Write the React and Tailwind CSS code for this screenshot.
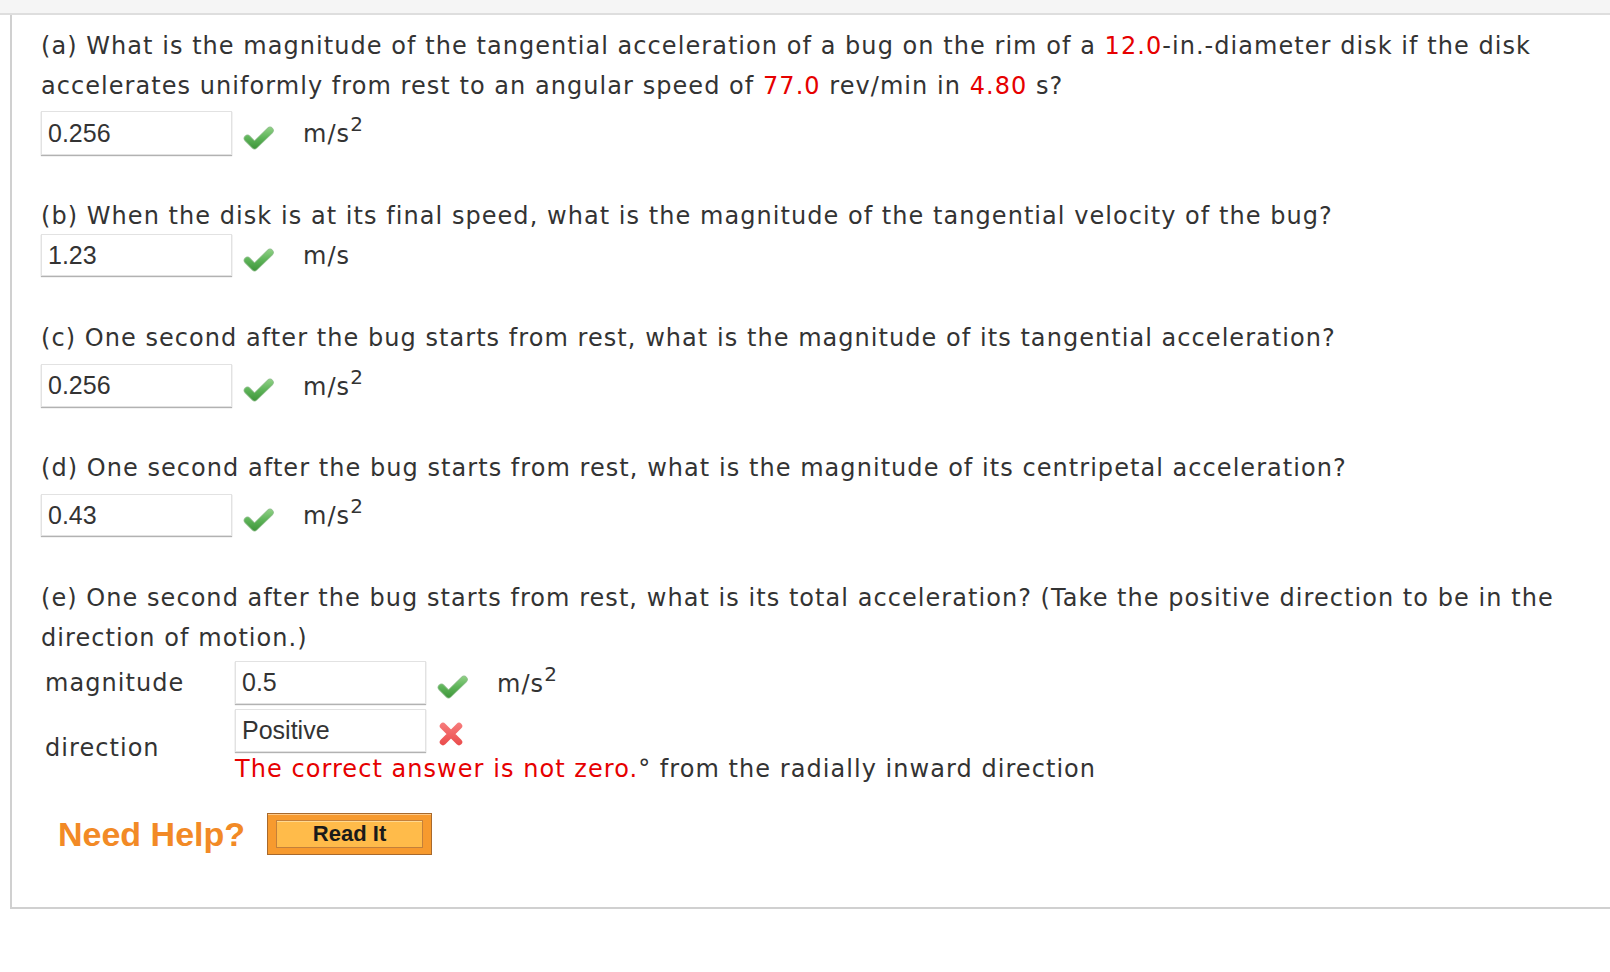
import React from "react";

const txt = "font-['DejaVu_Sans',Verdana,sans-serif] text-[24px] tracking-[1.05px] text-[#333]";
const red = "text-[#e60000]";

function Check() {
  return (
    <svg width="31" height="25" viewBox="0 0 31 25" className="mt-[8px]">
      <defs>
        <linearGradient id="chk" x1="0" y1="0" x2="0" y2="25" gradientUnits="userSpaceOnUse">
          <stop offset="0" stopColor="#9bd68f" />
          <stop offset="0.5" stopColor="#5fb55a" />
          <stop offset="1" stopColor="#3a9236" />
        </linearGradient>
      </defs>
      <path d="M4.5 13.5 L11.5 20.5 L27 5.5" fill="none" stroke="#3b8a37" strokeWidth="7.5" strokeLinecap="round" strokeLinejoin="round" opacity="0.55" />
      <path d="M4.5 13.5 L11.5 20.5 L27 5.5" fill="none" stroke="url(#chk)" strokeWidth="6" strokeLinecap="round" strokeLinejoin="round" />
    </svg>
  );
}

function Cross() {
  return (
    <svg width="26" height="26" viewBox="0 0 26 26" className="mt-[6px]">
      <defs>
        <linearGradient id="crs" x1="0" y1="0" x2="0" y2="26" gradientUnits="userSpaceOnUse">
          <stop offset="0" stopColor="#f88080" />
          <stop offset="1" stopColor="#e94848" />
        </linearGradient>
      </defs>
      <path d="M5 5 L21 21 M21 5 L5 21" fill="none" stroke="url(#crs)" strokeWidth="6.5" strokeLinecap="round" />
    </svg>
  );
}

function Box({ value, h = "h-[43px]" }) {
  return (
    <input
      readOnly
      value={value}
      className={`w-[191px] ${h} px-[6px] bg-white border border-[#e2e2e2] shadow-[0_1px_1px_rgba(0,0,0,0.3)] outline-none font-['Liberation_Sans',Arial,sans-serif] text-[25px] text-[#333]`}
    />
  );
}

function Unit({ sq }) {
  return (
    <span className={`${txt} leading-none tracking-[0.5px]`}>
      m/s{sq && <sup className="text-[20px] relative -top-[11px] align-baseline">2</sup>}
    </span>
  );
}

function UnitCell({ sq }) {
  return (
    <>
      <div className="ml-[11px] w-[31px] flex items-center">
        <Check />
      </div>
      <div className="ml-[29px] mt-[4px]">
        <Unit sq={sq} />
      </div>
    </>
  );
}

function AnswerRow({ value, sq, className = "", h }) {
  return (
    <div className={`flex items-center ${className}`}>
      <Box value={value} h={h} />
      <UnitCell sq={sq} />
    </div>
  );
}

export default function App() {
  return (
    <div className="min-h-screen bg-white">
      <div className="h-[15px] bg-[#f5f5f5] border-b-2 border-[#dedede]" />
      <div className="ml-[10px] border-l-2 border-b-2 border-[#d0d0d0] pl-[29px] pt-[11px] pb-[52px]">
        <p className={`${txt} leading-[40px] pr-[40px]`}>
          (a) What is the magnitude of the tangential acceleration of a bug on the rim of a <span className={red}>12.0</span>-in.-diameter disk if the disk accelerates uniformly from rest to an angular speed of <span className={red}>77.0</span> rev/min in <span className={red}>4.80</span> s?
        </p>
        <AnswerRow value="0.256" sq className="mt-[5px]" h="h-[44px]" />

        <p className={`${txt} leading-[40px] mt-[41px]`}>
          (b) When the disk is at its final speed, what is the magnitude of the tangential velocity of the bug?
        </p>
        <AnswerRow value="1.23" className="-mt-[2px]" h="h-[42px]" />

        <p className={`${txt} leading-[40px] mt-[42px]`}>
          (c) One second after the bug starts from rest, what is the magnitude of its tangential acceleration?
        </p>
        <AnswerRow value="0.256" sq className="mt-[6px]" />

        <p className={`${txt} leading-[40px] mt-[41px]`}>
          (d) One second after the bug starts from rest, what is the magnitude of its centripetal acceleration?
        </p>
        <AnswerRow value="0.43" sq className="mt-[6px]" h="h-[42px]" />

        <p className={`${txt} leading-[40px] mt-[42px] pr-[10px]`}>
          (e) One second after the bug starts from rest, what is its total acceleration? (Take the positive direction to be in the direction of motion.)
        </p>
        <div className="mt-[3px]">
          <div className="flex items-center">
            <div className={`${txt} w-[194px] pl-[4px]`}>magnitude</div>
            <Box value="0.5" />
            <UnitCell sq />
          </div>
          <div className="flex items-center mt-[5px]">
            <div className={`${txt} w-[194px] pl-[4px] pt-[2px]`}>direction</div>
            <div className="flex flex-col">
              <div className="flex items-center">
                <Box value="Positive" />
                <div className="ml-[12px] flex items-center">
                  <Cross />
                </div>
              </div>
              <div className={`${txt} leading-[30px] mt-[2px]`}>
                <span className={red}>The correct answer is not zero.</span>° from the radially inward direction
              </div>
            </div>
          </div>
        </div>

        <div className="flex items-center mt-[29px] pl-[17px]">
          <span className="font-['Liberation_Sans',Arial,sans-serif] font-bold text-[34px] text-[#f28a26] leading-none">
            Need Help?
          </span>
          <button className="ml-[22px] w-[165px] h-[42px] p-[6px_8px] bg-[#f79a2e] border border-[#a8692c] shadow-[inset_0_1px_0_#fcc98a]">
            <div className="w-full h-full bg-[#ffbb4a] border border-[#c4803a] shadow-[inset_0_1px_0_#ffd890] flex items-center justify-center font-['Liberation_Sans',Arial,sans-serif] font-bold text-[22px] text-[#1a1a1a] leading-none">
              Read It
            </div>
          </button>
        </div>
      </div>
    </div>
  );
}
